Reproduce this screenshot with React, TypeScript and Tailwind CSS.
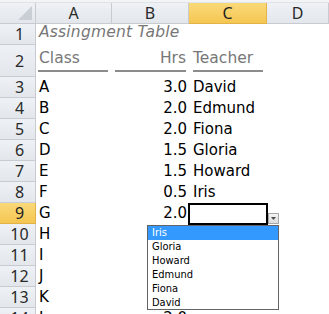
import React from "react";

const cellFont = { fontFamily: '"DejaVu Sans", Verdana, sans-serif' };
const hdrFont = { fontFamily: '"Noto Sans", "Open Sans", sans-serif' };

const rows: [string, string, string][] = [
  ["A", "3.0", "David"],
  ["B", "2.0", "Edmund"],
  ["C", "2.0", "Fiona"],
  ["D", "1.5", "Gloria"],
  ["E", "1.5", "Howard"],
  ["F", "0.5", "Iris"],
  ["G", "2.0", ""],
  ["H", "", ""],
  ["I", "", ""],
  ["J", "", ""],
  ["K", "", ""],
  ["L", "2.0", ""],
];

function RowHead({ n, active, tall }: { n: number; active?: boolean; tall?: boolean }) {
  return (
    <div
      className={`${tall ? "h-[32px]" : "h-[21px]"} flex items-center justify-center border-r border-b text-[16px] ${
        active
          ? "bg-gradient-to-b from-[#f9d979] to-[#f5c650] border-[#e2b34b] text-[#222]"
          : "bg-gradient-to-b from-[#eef1f5] to-[#e3e7ec] border-[#c8ccd2] text-[#2a2a2a]"
      }`}
      style={hdrFont}
    >
      <span className="pl-[4px]">{n}</span>
    </div>
  );
}

export default function App() {
  return (
    <div className="w-[329px] h-[314px] overflow-hidden bg-white relative">
      <div className="h-[3px] bg-[#f3f4f6] border-b border-[#dfe3e8]" />
      <div className="grid grid-cols-[36px_76px_77px_78px_62px]">
        {/* header row */}
        <div className="h-[21px] border-r border-b border-[#c8ccd2] bg-gradient-to-b from-[#eef1f5] to-[#e3e7ec] relative">
          <div
            className="absolute right-[3px] bottom-[3px] w-[14px] h-[14px] bg-[#c9ced5]"
            style={{ clipPath: "polygon(100% 0, 100% 100%, 0 100%)" }}
          />
        </div>
        {["A", "B", "C", "D"].map((c) => (
          <div
            key={c}
            className={`h-[21px] flex items-center justify-center border-r border-b text-[16px] ${
              c === "C"
                ? "bg-gradient-to-b from-[#f9d979] to-[#f5c650] border-[#e2b34b] text-[#222]"
                : "bg-gradient-to-b from-[#eef1f5] to-[#e3e7ec] border-[#c8ccd2] text-[#2a2a2a]"
            }`}
            style={hdrFont}
          >
            {c}
          </div>
        ))}

        {/* row 1 */}
        <RowHead n={1} />
        <div
          className="col-span-4 h-[21px] flex items-end pb-[1px] pl-[3px] text-[15.5px] italic text-[#777] whitespace-nowrap tracking-[0.2px]"
          style={cellFont}
        >
          Assingment Table
        </div>

        {/* row 2 */}
        <RowHead n={2} tall />
        <div className="h-[32px] flex flex-col pl-[2px] pr-[4px] pt-[3px]" style={cellFont}>
          <span className="text-[15.5px] text-[#777] leading-[20px] pl-[1px]">Class</span>
          <div className="h-[2px] mt-[2px] bg-[#8c8c8c]" />
        </div>
        <div className="h-[32px] flex flex-col pl-[3px] pr-[3px] pt-[3px]" style={cellFont}>
          <span className="text-[15.5px] text-[#777] leading-[20px] text-right">Hrs</span>
          <div className="h-[2px] mt-[2px] bg-[#8c8c8c]" />
        </div>
        <div className="h-[32px] flex flex-col pl-[4px] pr-[4px] pt-[3px]" style={cellFont}>
          <span className="text-[15.5px] text-[#777] leading-[20px]">Teacher</span>
          <div className="h-[2px] mt-[2px] bg-[#8c8c8c]" />
        </div>
        <div className="h-[32px]" />

        {rows.map(([a, b, c], i) => {
          const n = i + 3;
          return (
            <React.Fragment key={n}>
              <RowHead n={n} active={n === 9} />
              <div className="h-[21px] flex items-center pl-[3px] text-[15px] text-black" style={cellFont}>
                {a}
              </div>
              <div className="h-[21px] flex items-center justify-end pr-[2px] text-[15px] text-black" style={cellFont}>
                {b}
              </div>
              <div className="h-[21px] flex items-center pl-[4px] text-[15px] text-black relative" style={cellFont}>
                {c}
                {n === 9 && (
                  <div className="absolute left-[-1px] top-0 w-[80px] h-[22px] border-2 border-black" />
                )}
              </div>
              <div className="h-[21px]" />
            </React.Fragment>
          );
        })}
      </div>

      {/* dropdown button */}
      <div className="absolute left-[268px] top-[213px] w-[11px] h-[11px] bg-gradient-to-b from-[#f4f4f4] to-[#dcdcdc] border border-[#a8a8a8] flex items-center justify-center">
        <svg width="5" height="3" viewBox="0 0 5 3">
          <polygon points="0,0 5,0 2.5,3" fill="#4a4a4a" />
        </svg>
      </div>

      {/* dropdown list */}
      <div
        className="absolute left-[147px] top-[225px] w-[132px] h-[85px] bg-white border border-[#646464] text-[11px] text-black leading-[14px]"
        style={{ fontFamily: 'Tahoma, "DejaVu Sans Condensed", "DejaVu Sans", sans-serif' }}
      >
        {["Iris", "Gloria", "Howard", "Edmund", "Fiona", "David"].map((t, i) => (
          <div
            key={t}
            className={`h-[14px] pl-[4px] flex items-center ${i === 0 ? "bg-[#3399ff] text-white" : ""}`}
          >
            {t}
          </div>
        ))}
      </div>
    </div>
  );
}
